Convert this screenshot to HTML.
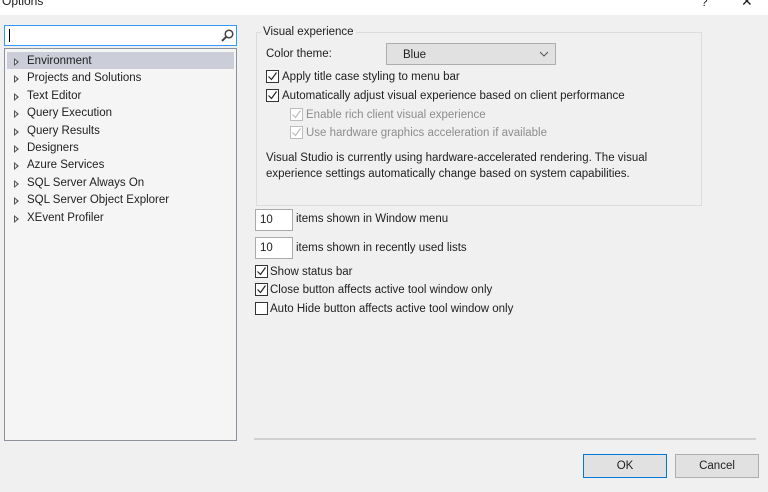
<!DOCTYPE html>
<html><head><meta charset="utf-8"><style>
*{margin:0;padding:0;box-sizing:border-box}
body{width:768px;height:492px;background:#f0f0f0;font-family:"Liberation Sans",sans-serif;font-size:11.5px;line-height:16px;color:#1e1e1e;position:relative;overflow:hidden}
.a{position:absolute;white-space:nowrap}
.cb{position:absolute;width:13px;height:13px;border:1px solid #333;background:#fff}
.cb svg{position:absolute;left:0px;top:0px}
.cb.g{border-color:#bcbcbc}
.g2{color:#8d8d8d}
.row{position:absolute;left:0;height:17px;line-height:17px}
.row span.a{top:1px}
.tri{position:absolute;left:9px;top:6px;width:0;height:0;border-left:5px solid #555;border-top:4px solid transparent;border-bottom:4px solid transparent}
.tri:after{content:"";position:absolute;left:-4px;top:-2px;border-left:2.5px solid #f5f5f5;border-top:2px solid transparent;border-bottom:2px solid transparent}
</style></head><body>
<div class="a" style="left:0;top:0;width:768px;height:15px;background:#fff"></div>
<div class="a" style="left:2px;top:-7px;font-size:12px">Options</div>
<div class="a" style="left:701px;top:-6px;font-size:12px">?</div>
<div class="a" style="left:741px;top:-7px;font-size:14px">✕</div>

<div class="a" style="left:4px;top:25px;width:233px;height:21px;border:1px solid #3399ff;background:#fff">
<div class="a" style="left:4px;top:3px;width:1px;height:13px;background:#000"></div>
<svg class="a" style="left:216px;top:3px" width="13" height="13"><circle cx="8" cy="5" r="3.8" fill="none" stroke="#444" stroke-width="1.5"/><line x1="5.3" y1="7.7" x2="1" y2="12" stroke="#444" stroke-width="2"/></svg>
</div>
<div class="a" style="left:4px;top:48px;width:233px;height:393px;border:1px solid #8c919c;background:#f5f5f5">
<div class="row" style="top:3px;left:2px;width:227px;background:#cbcdd9"></div>
<div class="row" style="top:3px;width:230px"><span class="tri"></span><span class="a" style="left:22px">Environment</span></div>
<div class="row" style="top:20px;width:230px"><span class="tri"></span><span class="a" style="left:22px">Projects and Solutions</span></div>
<div class="row" style="top:38px;width:230px"><span class="tri"></span><span class="a" style="left:22px">Text Editor</span></div>
<div class="row" style="top:55px;width:230px"><span class="tri"></span><span class="a" style="left:22px">Query Execution</span></div>
<div class="row" style="top:73px;width:230px"><span class="tri"></span><span class="a" style="left:22px">Query Results</span></div>
<div class="row" style="top:90px;width:230px"><span class="tri"></span><span class="a" style="left:22px">Designers</span></div>
<div class="row" style="top:107px;width:230px"><span class="tri"></span><span class="a" style="left:22px">Azure Services</span></div>
<div class="row" style="top:125px;width:230px"><span class="tri"></span><span class="a" style="left:22px">SQL Server Always On</span></div>
<div class="row" style="top:142px;width:230px"><span class="tri"></span><span class="a" style="left:22px">SQL Server Object Explorer</span></div>
<div class="row" style="top:160px;width:230px"><span class="tri"></span><span class="a" style="left:22px">XEvent Profiler</span></div>
</div>

<div class="a" style="left:256px;top:32px;width:446px;height:174px;border:1px solid #dcdcdc"></div>
<div class="a" style="left:261px;top:24px;padding:0 2px;background:#f0f0f0">Visual experience</div>
<div class="a" style="left:266px;top:46px">Color theme:</div>
<div class="a" style="left:386px;top:43px;width:170px;height:22px;border:1px solid #adadad;background:#e1e1e1"><span class="a" style="left:16px;top:3px">Blue</span>
<svg class="a" style="left:152px;top:7px" width="10" height="6"><path d="M1 1 L5 5 L9 1" fill="none" stroke="#555"/></svg></div>

<div class="cb" style="left:266px;top:70px"><svg width="11" height="11"><path d="M1.5 5.5 L4.5 8.5 L9.5 1.5" fill="none" stroke="#222" stroke-width="1.2"/></svg></div>
<div class="a" style="left:282px;top:69px">Apply title case styling to menu bar</div>
<div class="cb" style="left:266px;top:89px"><svg width="11" height="11"><path d="M1.5 5.5 L4.5 8.5 L9.5 1.5" fill="none" stroke="#222" stroke-width="1.2"/></svg></div>
<div class="a" style="left:282px;top:88px">Automatically adjust visual experience based on client performance</div>
<div class="cb g" style="left:290px;top:108px"><svg width="11" height="11"><path d="M1.5 5.5 L4.5 8.5 L9.5 1.5" fill="none" stroke="#bbb" stroke-width="1.2"/></svg></div>
<div class="a g2" style="left:306px;top:107px">Enable rich client visual experience</div>
<div class="cb g" style="left:290px;top:126px"><svg width="11" height="11"><path d="M1.5 5.5 L4.5 8.5 L9.5 1.5" fill="none" stroke="#bbb" stroke-width="1.2"/></svg></div>
<div class="a g2" style="left:306px;top:125px">Use hardware graphics acceleration if available</div>
<div class="a" style="left:266px;top:150px;line-height:16px">Visual Studio is currently using hardware-accelerated rendering. The visual<br>experience settings automatically change based on system capabilities.</div>

<div class="a" style="left:255px;top:209px;width:38px;height:22px;border:1px solid #aaa;background:#fff"><span class="a" style="left:4px;top:2px">10</span></div>
<div class="a" style="left:296px;top:211px">items shown in Window menu</div>
<div class="a" style="left:255px;top:237px;width:38px;height:22px;border:1px solid #aaa;background:#fff"><span class="a" style="left:4px;top:2px">10</span></div>
<div class="a" style="left:296px;top:240px">items shown in recently used lists</div>

<div class="cb" style="left:255px;top:265px"><svg width="11" height="11"><path d="M1.5 5.5 L4.5 8.5 L9.5 1.5" fill="none" stroke="#222" stroke-width="1.2"/></svg></div>
<div class="a" style="left:270px;top:264px">Show status bar</div>
<div class="cb" style="left:255px;top:283px"><svg width="11" height="11"><path d="M1.5 5.5 L4.5 8.5 L9.5 1.5" fill="none" stroke="#222" stroke-width="1.2"/></svg></div>
<div class="a" style="left:270px;top:282px">Close button affects active tool window only</div>
<div class="cb" style="left:255px;top:302px"></div>
<div class="a" style="left:270px;top:301px">Auto Hide button affects active tool window only</div>

<div class="a" style="left:254px;top:438px;width:502px;height:2px;background:#d0d0d0"></div>
<div class="a" style="left:583px;top:454px;width:84px;height:24px;border:1px solid #0078d7;background:#e1e1e1;text-align:center;line-height:22px">OK</div>
<div class="a" style="left:675px;top:454px;width:84px;height:24px;border:1px solid #adadad;background:#e1e1e1;text-align:center;line-height:22px">Cancel</div>
</body></html>
